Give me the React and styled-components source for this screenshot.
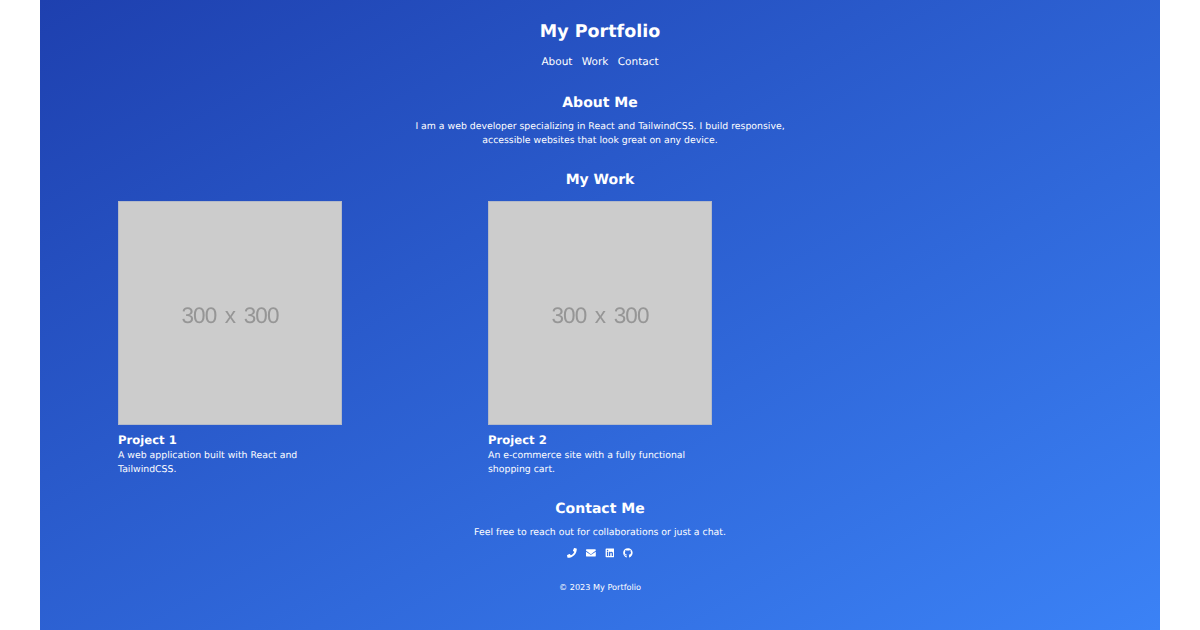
import React from "react";
import styled, { createGlobalStyle } from "styled-components";
import { FaPhone, FaEnvelope, FaLinkedin, FaGithub } from "react-icons/fa";

const GlobalStyle = createGlobalStyle`
  html, body {
    margin: 0;
    padding: 0;
    background: #fff;
  }
  body {
    font-family: "DejaVu Sans", sans-serif;
    color: #fff;
    text-rendering: geometricPrecision;
  }
`;

const Page = styled.div`
  box-sizing: border-box;
  width: 1120px;
  height: 630px;
  margin: 0 auto;
  overflow: hidden;
  background: linear-gradient(to bottom right, #1e40af, #3b82f6);
  text-align: center;
`;

const Header = styled.header`
  padding-top: 22px;
`;

const Title = styled.h1`
  margin: 0;
  font-size: 17.5px;
  line-height: 21px;
  font-weight: 700;
`;

const Nav = styled.nav`
  display: flex;
  justify-content: center;
  gap: 9.33px;
  margin-top: 12px;
`;

const NavLink = styled.a`
  font-size: 10.5px;
  line-height: 14px;
  color: #fff;
`;

const Section = styled.section`
  margin-top: ${props => props.$top}px;
`;

const Heading = styled.h2`
  margin: 0;
  font-size: 14px;
  line-height: 17px;
  font-weight: 700;
`;

const Text = styled.p`
  width: 390px;
  margin: 8px auto 0;
  font-size: 9.33px;
  line-height: 14px;
`;

const Grid = styled.div`
  display: grid;
  grid-template-columns: repeat(3, 224px);
  justify-content: center;
  column-gap: 146px;
  margin-top: 12px;
  text-align: left;
`;

const Placeholder = styled.div`
  display: flex;
  align-items: center;
  justify-content: center;
  box-sizing: border-box;
  width: 224px;
  height: 224px;
  padding-top: 6px;
  background: #cccccc;
  border: 1px solid #b4bac8;
`;

const PlaceholderLabel = styled.span`
  color: #969696;
  font-family: "Liberation Sans", Arial, sans-serif;
  font-size: 22.5px;
  letter-spacing: -0.9px;
  word-spacing: 3.2px;
  filter: blur(0.5px);
`;

const ProjectName = styled.h3`
  margin: 8px 0 0;
  font-size: 11.67px;
  line-height: 14px;
  font-weight: 700;
`;

const ProjectText = styled.p`
  margin: 2px 0 0;
  font-size: 9.33px;
  line-height: 14px;
`;

const Icons = styled.div`
  display: flex;
  justify-content: center;
  gap: 9px;
  margin-top: 8px;
  height: 10px;
  font-size: 9.8px;
`;

const Footer = styled.footer`
  margin-top: 22.5px;
  font-size: 8.17px;
  line-height: 12px;
`;

const projects = [
  { name: "Project 1", text: "A web application built with React and TailwindCSS." },
  { name: "Project 2", text: "An e-commerce site with a fully functional shopping cart." },
];

export default function App() {
  return (
    <Page>
      <GlobalStyle />
      <Header>
        <Title>My Portfolio</Title>
        <Nav>
          <NavLink>About</NavLink>
          <NavLink>Work</NavLink>
          <NavLink>Contact</NavLink>
        </Nav>
      </Header>
      <Section $top={26}>
        <Heading>About Me</Heading>
        <Text>I am a web developer specializing in React and TailwindCSS. I build responsive, accessible websites that look great on any device.</Text>
      </Section>
      <Section $top={24}>
        <Heading>My Work</Heading>
        <Grid>
          {projects.map(p => (
            <div key={p.name}>
              <Placeholder><PlaceholderLabel>300 x 300</PlaceholderLabel></Placeholder>
              <ProjectName>{p.name}</ProjectName>
              <ProjectText>{p.text}</ProjectText>
            </div>
          ))}
        </Grid>
      </Section>
      <Section $top={24}>
        <Heading>Contact Me</Heading>
        <Text>Feel free to reach out for collaborations or just a chat.</Text>
        <Icons>
          <FaPhone />
          <FaEnvelope />
          <FaLinkedin />
          <FaGithub />
        </Icons>
      </Section>
      <Footer>© 2023 My Portfolio</Footer>
    </Page>
  );
}
